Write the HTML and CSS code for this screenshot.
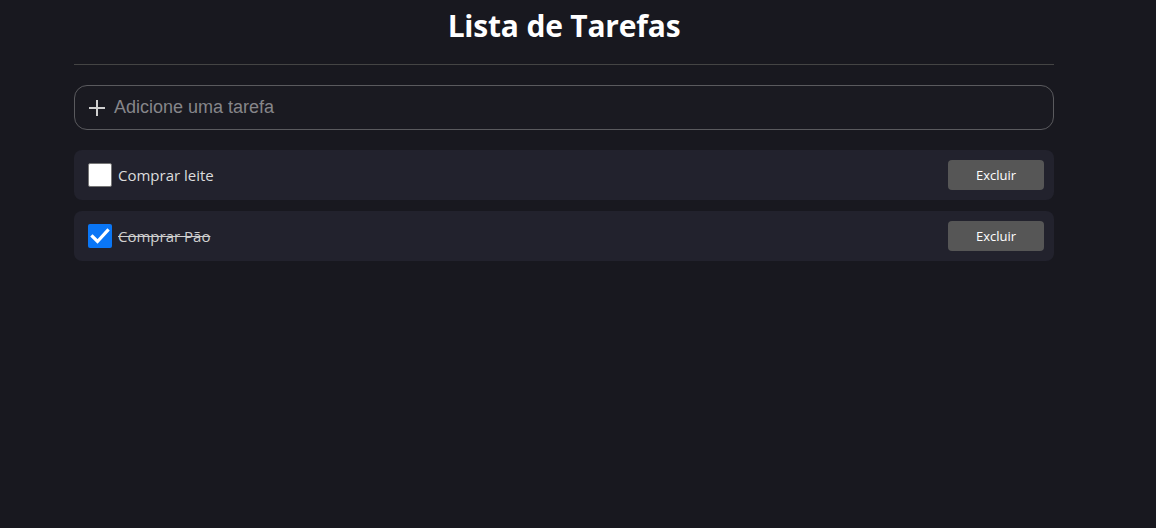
FILE: index.html
```html
<!DOCTYPE html>
<html lang="pt">
<head>
<meta charset="utf-8">
<title>Lista de Tarefas</title>
<link rel="stylesheet" href="styles.css">
</head>
<body>
<main class="app">
  <h1 class="title">Lista de Tarefas</h1>
  <hr class="divider">
  <div class="add">
    <svg class="plus" width="18" height="18" viewBox="0 0 18 18"><path d="M9 1v16M1 9h16" stroke="#d0d0d0" stroke-width="2" fill="none"/></svg>
    <span class="placeholder">Adicione uma tarefa</span>
  </div>
  <ul class="list">
    <li class="item">
      <span class="check"></span>
      <span class="label">Comprar leite</span>
      <button class="del">Excluir</button>
    </li>
    <li class="item done">
      <span class="check checked"><svg width="24" height="24" viewBox="0 0 24 24"><path d="M4.5 12.5l5 5 10-11" stroke="#fff" stroke-width="3.2" fill="none" stroke-linecap="square"/></svg></span>
      <span class="label">Comprar Pão</span>
      <button class="del">Excluir</button>
    </li>
  </ul>
</main>
</body>
</html>
```

FILE: styles.css
```css
html, body {
  margin: 0;
  padding: 0;
  background: #18181f;
  height: 100%;
}
body {
  font-family: "Open Sans", "Noto Sans", sans-serif;
  color: #fff;
}
.app {
  width: 980px;
  margin-left: 74px;
  display: flex;
  flex-direction: column;
}
.title {
  margin: 0;
  padding-top: 5px;
  height: 42px;
  text-align: center;
  font-size: 30px;
  font-weight: 700;
  line-height: 42px;
  letter-spacing: -0.2px;
}
.divider {
  margin: 17px 0 0 0;
  border: 0;
  border-top: 1px solid #444;
  height: 0;
}
.add {
  margin-top: 20px;
  height: 43px;
  border: 1px solid #5a5a5e;
  border-radius: 13px;
  background: #1a1a21;
  display: flex;
  align-items: center;
  padding-left: 13px;
  gap: 8px;
}
.plus { display: block; }
.placeholder {
  font-family: "Liberation Sans", Arial, sans-serif;
  font-size: 18px;
  color: #86868a;
}
.list {
  list-style: none;
  margin: 20px 0 0 0;
  padding: 0;
  display: flex;
  flex-direction: column;
  gap: 11px;
}
.item {
  height: 50px;
  background: #22222d;
  border-radius: 8px;
  display: flex;
  align-items: center;
  padding: 0 10px 0 14px;
  box-sizing: border-box;
}
.check {
  width: 24px;
  height: 24px;
  box-sizing: border-box;
  border: 1px solid #767676;
  background: #fff;
  border-radius: 2px;
  flex: none;
  display: flex;
}
.check.checked {
  background: #0a76f6;
  border: 0;
}
.label {
  margin-left: 6px;
  font-size: 15px;
  color: #dcdcdc;
  flex: 1;
}
.done .label {
  text-decoration: line-through;
  color: #cfcfcf;
}
.del {
  width: 96px;
  height: 30px;
  border: 0;
  border-radius: 4px;
  background: #565656;
  color: #fff;
  font-family: "Open Sans", "Noto Sans", sans-serif;
  font-size: 13px;
  cursor: pointer;
}
```
